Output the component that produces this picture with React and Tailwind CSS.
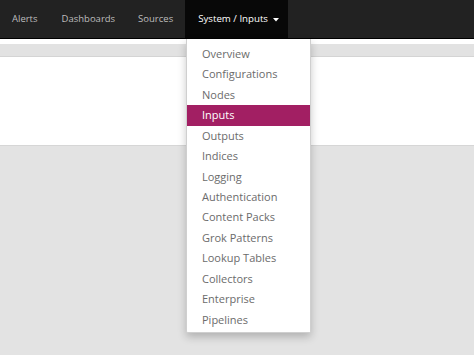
import React from "react";

const items = [
  "Overview",
  "Configurations",
  "Nodes",
  "Inputs",
  "Outputs",
  "Indices",
  "Logging",
  "Authentication",
  "Content Packs",
  "Grok Patterns",
  "Lookup Tables",
  "Collectors",
  "Enterprise",
  "Pipelines",
];

export default function App() {
  return (
    <div className="relative w-[474px] h-[355px] overflow-hidden bg-[#e3e3e3] font-['Open_Sans',sans-serif]">
      <nav className="flex h-[39px] bg-[#222222] border-b border-black">
        <div className="flex items-center px-3 text-[9.5px] text-[#bdbdbd]">Alerts</div>
        <div className="flex items-center px-3 text-[9.5px] text-[#bdbdbd]">Dashboards</div>
        <div className="flex items-center pl-[11px] pr-[12px] text-[9.5px] text-[#bdbdbd]">Sources</div>
        <div className="flex w-[103px] items-center gap-[5px] pl-[13px] bg-[#080808] text-[9.7px] text-white">
          <span>System / Inputs</span>
          <svg width="6" height="4" viewBox="0 0 6 4" className="mt-[1px]">
            <path d="M0 0 L6 0 L3 3.5 Z" fill="#ffffff" />
          </svg>
        </div>
      </nav>
      <div className="h-[5px] bg-white" />
      <div className="h-[13px] bg-[#e2e2e2] border-b border-[#d4d4d4]" />
      <div className="h-[89px] bg-white border-b border-[#d6d6d6]" />
      <div className="absolute left-[186px] top-[39px] w-[125px] bg-white border border-[#cfcfcf] border-t-0 rounded-b-[2px] shadow-[0_4px_8px_rgba(0,0,0,0.22)] pt-[5px] pb-[2px] text-[11px]">
        {items.map((it) => (
          <div
            key={it}
            className={
              "h-[20.45px] flex items-center pl-[15px] " +
              (it === "Inputs" ? "bg-[#a21f63] text-white" : "text-[#6b6b6b]")
            }
          >
            {it}
          </div>
        ))}
      </div>
    </div>
  );
}
